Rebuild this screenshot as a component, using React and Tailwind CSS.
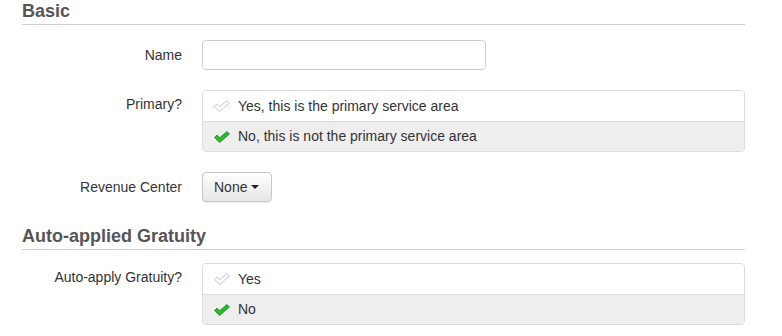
import React from "react";

function Check({ on }) {
  const pts = "0.6,6.5 3,4.1 5.6,6.8 13,0.5 15.4,2.9 5.6,11.5";
  return (
    <svg width="16" height="12" viewBox="0 0 16 12" className="shrink-0">
      {on ? (
        <polygon points={pts} fill="#1fc41f" stroke="#0f6f0f" strokeWidth="0.7" strokeLinejoin="round" />
      ) : (
        <polygon points={pts} fill="none" stroke="#bdbdbd" strokeWidth="0.9" strokeLinejoin="round" />
      )}
    </svg>
  );
}

function Heading({ children }) {
  return (
    <div className="border-b border-[#cfcfcf] pb-[3px] text-[18px] font-bold leading-[20px] text-[#555]">
      {children}
    </div>
  );
}

function Row({ label, children, labelClass = "" }) {
  return (
    <div className="flex items-start">
      <div className={`w-[160px] shrink-0 text-right text-[14px] leading-[20px] text-[#333] ${labelClass}`}>{label}</div>
      <div className="ml-[20px] flex-1">{children}</div>
    </div>
  );
}

function Choice({ items }) {
  return (
    <div className="overflow-hidden rounded-[4px] border border-[#dcdcdc]">
      {items.map((it, i) => (
        <div
          key={i}
          className={`flex h-[30px] items-center pl-[11px] text-[14px] text-[#333] ${
            i > 0 ? "border-t border-[#dcdcdc]" : ""
          } ${it.on ? "bg-[#eeeeee]" : "bg-white"}`}
        >
          <Check on={it.on} />
          <span className="ml-[8px]">{it.label}</span>
        </div>
      ))}
    </div>
  );
}

export default function App() {
  return (
    <div
      className="w-[782px] h-[336px] overflow-hidden bg-white pl-[22px] pr-[37px] pt-[1px]"
      style={{ fontFamily: '"Liberation Sans", Arial, sans-serif' }}
    >
      <Heading>Basic</Heading>
      <div className="mt-[15px]">
        <Row label="Name" labelClass="pt-[5px]">
          <div className="h-[30px] w-[284px] rounded-[4px] border border-[#cccccc] bg-white" />
        </Row>
      </div>
      <div className="mt-[20px]">
        <Row label="Primary?" labelClass="pt-[4px]">
          <Choice
            items={[
              { label: "Yes, this is the primary service area", on: false },
              { label: "No, this is not the primary service area", on: true },
            ]}
          />
        </Row>
      </div>
      <div className="mt-[20px]">
        <Row label="Revenue Center" labelClass="pt-[5px]">
          <button className="flex h-[30px] items-center rounded-[4px] border border-[#c8c8c8] bg-gradient-to-b from-white to-[#e6e6e6] pl-[11px] pr-[12px] text-[14px] text-[#333] shadow-[0_1px_1px_rgba(0,0,0,0.08)]">
            None
            <span className="ml-[4px] inline-block h-0 w-0 border-l-[4px] border-r-[4px] border-t-[4px] border-l-transparent border-r-transparent border-t-[#222]" />
          </button>
        </Row>
      </div>
      <div className="mt-[24px]">
        <Heading>Auto-applied Gratuity</Heading>
      </div>
      <div className="mt-[13px]">
        <Row label="Auto-apply Gratuity?" labelClass="pt-[4px]">
          <Choice
            items={[
              { label: "Yes", on: false },
              { label: "No", on: true },
            ]}
          />
        </Row>
      </div>
    </div>
  );
}
